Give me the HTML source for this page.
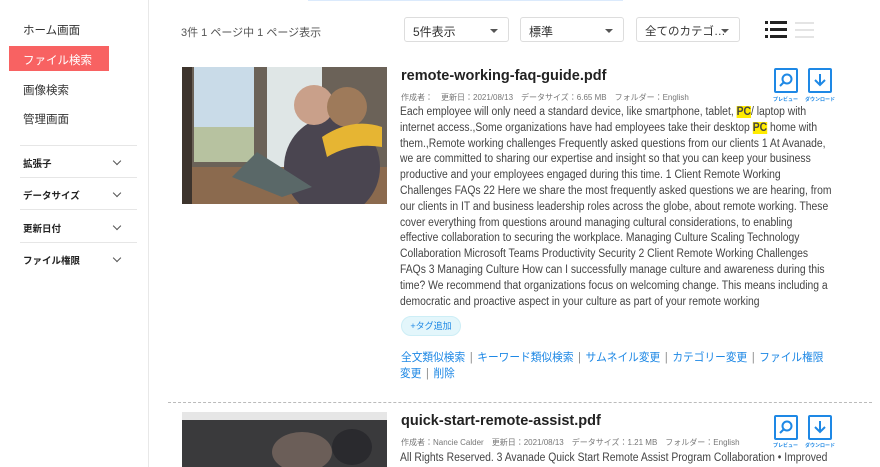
<!DOCTYPE html>
<html><head><meta charset="utf-8"><style>
*{margin:0;padding:0;box-sizing:border-box}
body{width:880px;height:467px;overflow:hidden;background:#fff;font-family:"Liberation Sans","Noto Sans CJK JP",sans-serif;color:#333;position:relative}
.a{position:absolute;white-space:nowrap}
.side{position:absolute;left:0;top:0;width:149px;height:467px;border-right:1px solid #e8e8e8}
.m{position:absolute;left:23px;font-size:11.5px;color:#333}
.hr{position:absolute;left:20px;width:117px;height:1px;background:#e6e6e6}
.f{position:absolute;left:23px;font-size:9.5px;font-weight:bold;color:#222}
.chev{position:absolute;left:114px;width:6px;height:6px;border-right:1px solid #555;border-bottom:1px solid #555;transform:rotate(45deg)}
.sel{position:absolute;top:17px;height:25px;border:1px solid #ddd;border-radius:3px;font-size:12px;padding:5px 8px;color:#333}
.sel:after{content:"";position:absolute;right:10px;top:11px;border:4px solid transparent;border-top:4px solid #555;border-bottom:0}
.body{position:absolute;left:400px;top:105px;font-size:11.5px;line-height:15.8px;color:#444}
.body div{white-space:nowrap;transform:scaleX(0.9);transform-origin:0 0;height:15.8px}
.hl{background:#ffeb00;font-weight:bold}
.meta{font-size:8px;color:#777}
.ico{position:absolute;width:24px;height:25px;border:2px solid #1e88e5;border-radius:2px}
.lbl{position:absolute;font-size:5px;color:#1e88e5;font-weight:bold}
.lk{position:absolute;left:401px;font-size:11.5px;color:#1e88e5;line-height:17px;white-space:nowrap;transform:scaleX(0.93);transform-origin:0 0}
.lk span{color:#888;margin:0 5px}
</style></head><body>
<div class="side">
<div class="m" style="top:22px">ホーム画面</div>
<div style="position:absolute;left:9px;top:46px;width:100px;height:25px;background:#f86262"></div>
<div class="m" style="top:52px;color:#fff">ファイル検索</div>
<div class="m" style="top:82px">画像検索</div>
<div class="m" style="top:111px">管理画面</div>
<div class="hr" style="top:145px"></div>
<div class="f" style="top:156px">拡張子</div><div class="chev" style="top:158px"></div>
<div class="hr" style="top:177px"></div>
<div class="f" style="top:188px">データサイズ</div><div class="chev" style="top:190px"></div>
<div class="hr" style="top:209px"></div>
<div class="f" style="top:221px">更新日付</div><div class="chev" style="top:223px"></div>
<div class="hr" style="top:242px"></div>
<div class="f" style="top:253px">ファイル権限</div><div class="chev" style="top:255px"></div>
</div>
<div style="position:absolute;left:308px;top:0;width:315px;height:1px;background:#dbeafc"></div>
<div class="a" style="left:181px;top:24px;font-size:11px;color:#555">3件 1 ページ中 1 ページ表示</div>
<div class="sel" style="left:404px;width:105px">5件表示</div>
<div class="sel" style="left:520px;width:104px">標準</div>
<div class="sel" style="left:636px;width:104px;font-size:11.5px">全てのカテゴ…</div>
<svg class="a" style="left:765px;top:20px" width="22" height="20"><g fill="#222"><rect x="0" y="1" width="3" height="3"/><rect x="5" y="1" width="17" height="3"/><rect x="0" y="8" width="3" height="3"/><rect x="5" y="8" width="17" height="3"/><rect x="0" y="15" width="3" height="3"/><rect x="5" y="15" width="17" height="3"/></g></svg>
<svg class="a" style="left:795px;top:20px" width="20" height="20"><g fill="#e4e4e4"><rect y="2" width="19" height="2"/><rect y="9" width="19" height="2"/><rect y="16" width="19" height="2"/></g></svg>

<svg class="a" style="left:182px;top:67px" width="205" height="137"><rect width="205" height="137" fill="#6b6258"/><rect x="12" y="0" width="60" height="95" fill="#c9dbe8"/><rect x="12" y="60" width="60" height="35" fill="#b7c2a0"/><rect x="85" y="0" width="55" height="100" fill="#dfe6e6"/><rect x="0" y="100" width="205" height="37" fill="#8b6a4e"/><rect x="0" y="0" width="10" height="137" fill="#3d342d"/><ellipse cx="150" cy="100" rx="48" ry="50" fill="#4a4550"/><circle cx="132" cy="38" r="20" fill="#c9a08a"/><circle cx="165" cy="40" r="20" fill="#9e7a5a"/><path d="M140 70 Q170 50 200 60 L200 80 Q170 75 145 90Z" fill="#e6b533"/><path d="M50 110 L75 85 L130 120 L100 130Z" fill="#5a6868"/></svg>

<div class="a" style="left:401px;top:68px;font-size:14.5px;font-weight:bold;color:#222">remote-working-faq-guide.pdf</div>
<div class="a meta" style="left:401px;top:92px">作成者：　更新日：2021/08/13　データサイズ：6.65 MB　フォルダー：English</div>
<div class="body">
<div>Each employee will only need a standard device, like smartphone, tablet, <span class="hl">PC</span>/ laptop with</div>
<div>internet access.,Some organizations have had employees take their desktop <span class="hl">PC</span> home with</div>
<div>them.,Remote working challenges Frequently asked questions from our clients 1 At Avanade,</div>
<div>we are committed to sharing our expertise and insight so that you can keep your business</div>
<div>productive and your employees engaged during this time. 1 Client Remote Working</div>
<div>Challenges FAQs 22 Here we share the most frequently asked questions we are hearing, from</div>
<div>our clients in IT and business leadership roles across the globe, about remote working. These</div>
<div>cover everything from questions around managing cultural considerations, to enabling</div>
<div>effective collaboration to securing the workplace. Managing Culture Scaling Technology</div>
<div>Collaboration Microsoft Teams Productivity Security 2 Client Remote Working Challenges</div>
<div>FAQs 3 Managing Culture How can I successfully manage culture and awareness during this</div>
<div>time? We recommend that organizations focus on welcoming change. This means including a</div>
<div>democratic and proactive aspect in your culture as part of your remote working</div>
</div>

<div class="ico" style="left:774px;top:68px"></div><svg class="a" style="left:778px;top:72px" width="16" height="16"><circle cx="9" cy="7" r="4.5" fill="none" stroke="#1e88e5" stroke-width="2"/><line x1="6" y1="10" x2="2" y2="14" stroke="#1e88e5" stroke-width="2"/></svg>
<div class="ico" style="left:808px;top:68px"></div><svg class="a" style="left:812px;top:72px" width="16" height="16"><path d="M8 2V13M3 8L8 13L13 8" fill="none" stroke="#1e88e5" stroke-width="2"/></svg>
<div class="lbl" style="left:773px;top:96px">プレビュー</div><div class="lbl" style="left:805px;top:96px">ダウンロード</div>

<div class="a" style="left:401px;top:316px;width:60px;height:20px;border-radius:10px;background:#e3f6fb;border:1px solid #cdeef6;font-size:9px;color:#1e88e5;text-align:center;line-height:18px">+タグ追加</div>
<div class="lk" style="top:350px">全文類似検索<span>|</span>キーワード類似検索<span>|</span>サムネイル変更<span>|</span>カテゴリー変更<span>|</span>ファイル権限</div>
<div class="lk" style="top:366px;left:400px">変更<span>|</span>削除</div>

<div style="position:absolute;left:168px;top:402px;width:704px;border-top:1px dashed #bbb"></div>

<svg class="a" style="left:182px;top:412px" width="205" height="55"><rect width="205" height="55" fill="#3a3a3c"/><rect x="0" y="0" width="205" height="8" fill="#e6e6e6"/><ellipse cx="120" cy="40" rx="30" ry="20" fill="#6b5e58"/><ellipse cx="170" cy="35" rx="20" ry="18" fill="#2a2a2e"/></svg>
<div class="a" style="left:401px;top:413px;font-size:14.5px;font-weight:bold;color:#222">quick-start-remote-assist.pdf</div>
<div class="a meta" style="left:401px;top:437px">作成者：Nancie Calder　更新日：2021/08/13　データサイズ：1.21 MB　フォルダー：English</div>
<div class="a" style="left:400px;top:452px;font-size:11.5px;color:#444;transform:scaleX(0.9);transform-origin:0 0">All Rights Reserved. 3 Avanade Quick Start Remote Assist Program Collaboration • Improved</div>
<div class="ico" style="left:774px;top:415px"></div><svg class="a" style="left:778px;top:419px" width="16" height="16"><circle cx="9" cy="7" r="4.5" fill="none" stroke="#1e88e5" stroke-width="2"/><line x1="6" y1="10" x2="2" y2="14" stroke="#1e88e5" stroke-width="2"/></svg>
<div class="ico" style="left:808px;top:415px"></div><svg class="a" style="left:812px;top:419px" width="16" height="16"><path d="M8 2V13M3 8L8 13L13 8" fill="none" stroke="#1e88e5" stroke-width="2"/></svg>
<div class="lbl" style="left:773px;top:442px">プレビュー</div><div class="lbl" style="left:805px;top:442px">ダウンロード</div>
</body></html>
